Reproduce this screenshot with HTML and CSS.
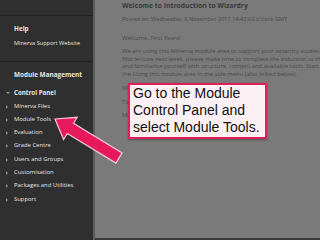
FILE: index.html
```html
<!DOCTYPE html>
<html lang="en">
<head>
    <meta charset="UTF-8">
    <meta name="viewport" content="width=device-width, initial-scale=1.0">
    <title>Introduction to Wizardry</title>
    <link rel="stylesheet" href="styles.css">
</head>
<body>
    <div class="sidebar">
        <div class="side-top"></div>
        <div class="side-help">
            <h2>Help</h2>
            <p class="side-link">Minerva Support Website</p>
        </div>
        <div class="side-module">
            <h2>Module Management</h2>
            <h3 class="open">Control Panel</h3>
            <ul class="menu">
                <li>Minerva Files</li>
                <li>Module Tools</li>
                <li>Evaluation</li>
                <li>Grade Centre</li>
                <li>Users and Groups</li>
                <li>Customisation</li>
                <li>Packages and Utilities</li>
                <li>Support</li>
            </ul>
        </div>
    </div>
    <div class="main">
        <h1>Welcome to Introduction to Wizardry</h1>
        <p class="posted">Posted on: Wednesday, 8 November 2017 14:43:02 o'clock GMT</p>
        <p class="greet">Welcome, First Years!</p>
        <p class="para">We are using this Minerva module area to support your wizardry studies. Before your<br>
            first lecture next week, please make time to complete the induction to this module<br>
            and familiarise yourself with structure, content and available tools. Start with<br>
            the Using this module area in the side menu (also linked below).</p>
        <p class="para">We look forward to meeting you all.</p>
        <p class="para">To begin, open the module handbook.</p>
        <p class="para">Merlin Module Team</p>
    </div>

    <div class="callout">Go to the Module Control Panel and select Module Tools.</div>

    <svg class="arrow" width="320" height="240" viewBox="0 0 320 240">
        <polygon points="55,119 77.2,117.3 73.5,123.3 122.1,152.9 115.9,163.1 67.3,133.5 63.6,139.5"
                 fill="#e8185d" stroke="#f8cddb" stroke-width="1.2" stroke-linejoin="miter"/>
    </svg>
</body>
</html>
```

FILE: styles.css
```css
body {
    margin: 0;
    width: 320px;
    height: 240px;
    overflow: hidden;
    display: flex;
    font-family: "Open Sans", "DejaVu Sans", sans-serif;
    background-color: #7a7a7a;
}
.sidebar {
    width: 93px;
    flex-shrink: 0;
    background: #2f2f2f;
    border-right: 2px solid #5c5c5c;
    color: #e6e6e6;
}
.side-top {
    height: 15px;
    border-bottom: 1px solid #222;
}
.side-help {
    padding: 8px 0 13px 14px;
    border-bottom: 1px solid #222;
}
.sidebar h2 {
    margin: 0;
    font-size: 6.4px;
    line-height: 10px;
    font-weight: 700;
    white-space: nowrap;
}
.side-link {
    margin: 4px 0 0;
    font-size: 5.6px;
    line-height: 10px;
    white-space: nowrap;
}
.side-module {
    padding: 8px 0 0 14px;
}
.sidebar h3 {
    margin: 8px 0 0;
    font-size: 6.2px;
    line-height: 10px;
    font-weight: 700;
    position: relative;
}
.sidebar h3.open::before {
    content: "";
    position: absolute;
    left: -8px;
    top: 4px;
    border-left: 2px solid transparent;
    border-right: 2px solid transparent;
    border-top: 2.5px solid #9a9a9a;
}
.menu {
    list-style: none;
    margin: 1.5px 0 0;
    padding: 0;
}
.menu li {
    font-size: 5.9px;
    line-height: 13.3px;
    white-space: nowrap;
    position: relative;
}
.menu li::before {
    content: "";
    position: absolute;
    left: -8px;
    top: 5px;
    border-top: 2px solid transparent;
    border-bottom: 2px solid transparent;
    border-left: 2.5px solid #8a8a8a;
}
.main {
    flex: 1;
    min-width: 0;
    padding: 2px 0 0 27px;
    color: #4a4a4a;
    white-space: nowrap;
    overflow: hidden;
    border-bottom: 2px solid #3a3a3a;
}
.main h1 {
    margin: 0;
    font-size: 6.8px;
    line-height: 8px;
    font-weight: 700;
    color: #3a3a3a;
}
.main p {
    margin: 0;
    font-size: 5.6px;
    line-height: 8px;
}
.posted {
    margin-top: 5px !important;
}
.greet {
    margin-top: 11px !important;
    font-size: 5.9px !important;
}
.para {
    margin-top: 6px !important;
    font-size: 5.9px !important;
    line-height: 7.7px !important;
}
.callout {
    position: absolute;
    left: 128px;
    top: 83px;
    width: 130px;
    height: 52px;
    padding: 0 2px 0 3px;
    background: #fdf0f4;
    border: 2px solid #e01e5a;
    box-shadow: 0 1px 2px rgba(0, 0, 0, 0.3);
    font-family: "Liberation Sans", Arial, sans-serif;
    font-size: 14px;
    line-height: 17px;
    color: #111;
}
.arrow {
    position: absolute;
    left: 0;
    top: 0;
    pointer-events: none;
}
```
